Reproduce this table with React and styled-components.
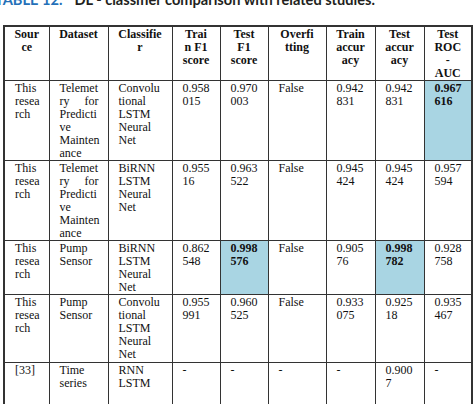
import React from "react";
import styled, { createGlobalStyle } from "styled-components";

const Global = createGlobalStyle`
  html, body { margin: 0; padding: 0; background: #fff; }
  body { width: 474px; height: 404px; overflow: hidden; }
`;

const Page = styled.div`
  padding-left: 3px;
`;

const Title = styled.div`
  font-family: Lato, "Open Sans", sans-serif;
  font-weight: 700;
  font-size: 14.6px;
  line-height: 20px;
  margin-top: -10px;
  margin-left: -8px;
  margin-bottom: 15px;
  height: 20px;
  white-space: nowrap;
  color: #231f20;
`;

const Label = styled.span`
  color: #2470b8;
  margin-right: 12px;
`;

const Table = styled.table`
  border-collapse: collapse;
  table-layout: fixed;
  width: 468px;
  font-family: "Liberation Serif", "Times New Roman", serif;
  font-size: 12px;
  line-height: 13px;
  color: #111;
  border: 2px solid #333;
`;

const Th = styled.th`
  border: 1.5px solid #333;
  font-weight: 700;
  text-align: center;
  vertical-align: top;
  padding: 1px 4px 0;
`;

const Td = styled.td`
  border: 1.5px solid #333;
  vertical-align: top;
  text-align: left;
  padding: 1px 9px 0 10px;
  background: ${(p) => (p.$hl ? "#a9d5e3" : "transparent")};
  font-weight: ${(p) => (p.$hl ? 700 : 400)};
`;

const Line = styled.div`
  text-align: ${(p) => (p.$justify ? "justify" : "left")};
  text-align-last: ${(p) => (p.$justify ? "justify" : "auto")};
`;

const widths = [45, 59, 64, 48, 48, 58, 49, 49, 48];

const headers = [
  ["Sour", "ce"],
  ["Dataset"],
  ["Classifie", "r"],
  ["Trai", "n F1", "score"],
  ["Test", "F1", "score"],
  ["Overfi", "tting"],
  ["Train", "accur", "acy"],
  ["Test", "accur", "acy"],
  ["Test", "ROC", "-", "AUC"],
];

const telemetry = [["Telemet"], ["ry for", true], ["Predicti"], ["ve"], ["Mainten"], ["ance"]];

const rows = [
  {
    cells: [
      [["This"], ["resea"], ["rch"]],
      telemetry,
      [["Convolu"], ["tional"], ["LSTM"], ["Neural"], ["Net"]],
      [["0.958"], ["015"]],
      [["0.970"], ["003"]],
      [["False"]],
      [["0.942"], ["831"]],
      [["0.942"], ["831"]],
      [["0.967"], ["616"]],
    ],
    hl: [8],
  },
  {
    cells: [
      [["This"], ["resea"], ["rch"]],
      telemetry,
      [["BiRNN"], ["LSTM"], ["Neural"], ["Net"]],
      [["0.955"], ["16"]],
      [["0.963"], ["522"]],
      [["False"]],
      [["0.945"], ["424"]],
      [["0.945"], ["424"]],
      [["0.957"], ["594"]],
    ],
    hl: [],
  },
  {
    cells: [
      [["This"], ["resea"], ["rch"]],
      [["Pump"], ["Sensor"]],
      [["BiRNN"], ["LSTM"], ["Neural"], ["Net"]],
      [["0.862"], ["548"]],
      [["0.998"], ["576"]],
      [["False"]],
      [["0.905"], ["76"]],
      [["0.998"], ["782"]],
      [["0.928"], ["758"]],
    ],
    hl: [4, 7],
  },
  {
    h: 68,
    cells: [
      [["This"], ["resea"], ["rch"]],
      [["Pump"], ["Sensor"]],
      [["Convolu"], ["tional"], ["LSTM"], ["Neural"], ["Net"]],
      [["0.955"], ["991"]],
      [["0.960"], ["525"]],
      [["False"]],
      [["0.933"], ["075"]],
      [["0.925"], ["18"]],
      [["0.935"], ["467"]],
    ],
    hl: [],
  },
  {
    h: 60,
    cells: [
      [["[33]"]],
      [["Time"], ["series"]],
      [["RNN"], ["LSTM"]],
      [["-"]],
      [["-"]],
      [["-"]],
      [["-"]],
      [["0.900"], ["7"]],
      [["-"]],
    ],
    hl: [],
  },
];

export default function App() {
  return (
    <>
      <Global />
      <Page>
        <Title>
          <Label>TABLE 12.</Label>
          DL - classifier comparison with related studies.
        </Title>
        <Table>
          <colgroup>
            {widths.map((w, i) => (
              <col key={i} style={{ width: w }} />
            ))}
          </colgroup>
          <thead>
            <tr>
              {headers.map((h, i) => (
                <Th key={i}>
                  {h.map((l, j) => (
                    <div key={j}>{l}</div>
                  ))}
                </Th>
              ))}
            </tr>
          </thead>
          <tbody>
            {rows.map((r, ri) => (
              <tr key={ri} style={r.h ? { height: r.h } : undefined}>
                {r.cells.map((c, ci) => (
                  <Td key={ci} $hl={r.hl.includes(ci)}>
                    {c.map(([t, j], li) => (
                      <Line key={li} $justify={j}>
                        {t}
                      </Line>
                    ))}
                  </Td>
                ))}
              </tr>
            ))}
          </tbody>
        </Table>
      </Page>
    </>
  );
}
